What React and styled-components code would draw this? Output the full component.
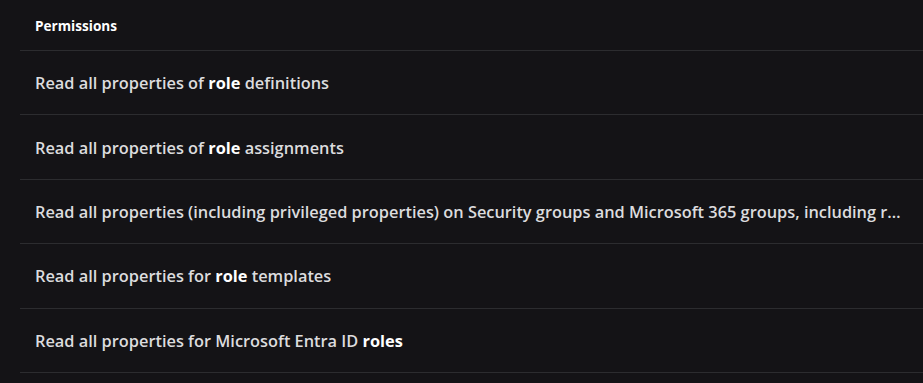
import React from "react";
import styled, { createGlobalStyle } from "styled-components";

const GlobalStyle = createGlobalStyle`
  html, body {
    margin: 0;
    padding: 0;
    background: #141316;
  }
  body {
    font-family: "Open Sans", "Noto Sans", sans-serif;
    -webkit-font-smoothing: antialiased;
  }
`;

const permissions = [
  ["Read all properties of ", "role", " definitions"],
  ["Read all properties of ", "role", " assignments"],
  [
    "Read all properties (including privileged properties) on Security groups and Microsoft 365 groups, including role-assignable groups",
  ],
  ["Read all properties for ", "role", " templates"],
  ["Read all properties for Microsoft Entra ID ", "roles", ""],
];

const App = () => {
  return (
    <>
      <GlobalStyle />
      <Wrapper>
        <Table>
          <HeaderRow>
            <HeaderCell>Permissions</HeaderCell>
          </HeaderRow>
          {permissions.map((p, i) => (
            <Row key={i}>
              <Cell>
                {p[0]}
                {p[1] ? <Match>{p[1]}</Match> : null}
                {p[2]}
              </Cell>
            </Row>
          ))}
        </Table>
      </Wrapper>
    </>
  );
};

export default App;

const Wrapper = styled.div`
  width: 923px;
  height: 383px;
  padding-left: 20px;
  box-sizing: border-box;
  overflow: hidden;
  background: #141316;
`;

const Table = styled.div`
  display: flex;
  flex-direction: column;
`;

const HeaderRow = styled.div`
  display: flex;
  align-items: center;
  height: 50px;
  padding-left: 15px;
  border-bottom: 1px solid #2c2c2f;
`;

const HeaderCell = styled.div`
  font-size: 13.6px;
  font-weight: 700;
  color: #ffffff;
  margin-top: 1px;
`;

const Row = styled.div`
  display: flex;
  align-items: center;
  height: 63.4px;
  padding-left: 15px;
  padding-right: 17px;
  border-bottom: 1px solid #2c2c2f;
  min-width: 0;
`;

const Cell = styled.div`
  font-size: 16.35px;
  font-weight: 600;
  color: #dcdcde;
  white-space: nowrap;
  overflow: hidden;
  text-overflow: ellipsis;
  min-width: 0;
  margin-top: 1px;
`;

const Match = styled.span`
  font-weight: 700;
  color: #ffffff;
`;
